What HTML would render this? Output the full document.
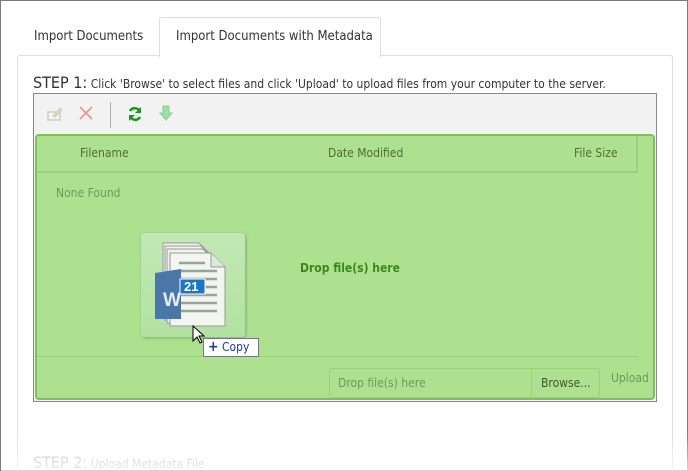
<!DOCTYPE html>
<html style="overflow:hidden"><head><meta charset="utf-8"><style>
*{box-sizing:border-box;margin:0;padding:0}
html,body{overflow:hidden}
body{width:688px;height:471px;background:#fff;font-family:"DejaVu Sans Condensed","Liberation Sans",sans-serif;position:relative;border:1px solid #7a7a7a}
.abs{position:absolute}
.tab{position:absolute;font-size:13px;color:#333}
</style></head><body>
<div class="tab" style="left:33px;top:28px">Import Documents</div>
<div class="abs" style="left:158px;top:16px;width:222px;height:40px;border:1px solid #ddd;border-bottom:none;background:#fff;z-index:2;border-radius:3px 3px 0 0"></div>
<div class="tab" style="left:175px;top:28px;z-index:3">Import Documents with Metadata</div>
<div class="abs" style="left:16px;top:54px;width:656px;height:430px;border:1px solid #ddd;border-radius:3px;z-index:1"></div>
<div class="abs" style="left:32px;top:72px;font-size:12px;color:#333;z-index:3;white-space:nowrap"><span style="font-size:16px">STEP 1:</span> Click 'Browse' to select files and click 'Upload' to upload files from your computer to the server.</div>
<div class="abs" style="left:32px;top:92px;width:624px;height:309px;border:1px solid #888;background:#f2f2f2;z-index:3">
  <svg class="abs" style="left:13px;top:12px" width="16" height="16" viewBox="0 0 16 16"><rect x="1" y="6" width="12" height="8" fill="#f4f4f4" stroke="#bbb"/><path d="M6 10 L13 2 L15 4 L8 11 Z" fill="#f3d9a0" stroke="#ccb"/></svg>
  <svg class="abs" style="left:45px;top:12px" width="14" height="14" viewBox="0 0 14 14"><path d="M1 1L13 13M13 1L1 13" stroke="#f09090" stroke-width="1.6"/></svg>
  <div class="abs" style="left:76px;top:8px;width:1px;height:26px;background:#aaa"></div>
  <svg class="abs" style="left:93px;top:12px" width="16" height="16" viewBox="0 0 16 16"><path d="M13 6A5.5 5.5 0 0 0 3 5" stroke="#1a9a1a" stroke-width="2.6" fill="none"/><path d="M3 10A5.5 5.5 0 0 0 13 11" stroke="#1a9a1a" stroke-width="2.6" fill="none"/><path d="M14 1V7H8Z" fill="#1a9a1a"/><path d="M2 15V9H8Z" fill="#1a9a1a"/></svg>
  <svg class="abs" style="left:125px;top:11px" width="14" height="17" viewBox="0 0 14 17"><path d="M4 1H10V8H13L7 15L1 8H4Z" fill="#9de0a8" stroke="#8ccf98"/></svg>
  <div class="abs" style="left:1px;top:40px;width:620px;height:266px;background:#ade190;border:2px solid #7fbf5e;border-radius:4px">
    <div class="abs" style="left:0;top:0;width:601px;height:37px;border-bottom:2px solid #9ccf80;border-right:2px solid #9ccf80"></div>
    <div class="abs" style="left:43px;top:10px;font-size:12px;color:#4e6e36">Filename</div>
    <div class="abs" style="left:291px;top:10px;font-size:12px;color:#4e6e36">Date Modified</div>
    <div class="abs" style="left:537px;top:10px;font-size:12px;color:#4e6e36">File Size</div>
    <div class="abs" style="left:19px;top:50px;font-size:12px;color:#6f9a55">None Found</div>
    <div class="abs" style="left:263px;top:125px;font-size:12px;color:#3a8a1a;font-weight:bold">Drop file(s) here</div>
    <div class="abs" style="left:0;top:220px;width:601px;height:1px;background:#9ccf80"></div>
    <div class="abs" style="left:292px;top:232px;width:271px;height:30px;border:1px solid #9ccf80;border-radius:3px"></div>
    <div class="abs" style="left:301px;top:240px;font-size:12px;color:#6f9a55">Drop file(s) here</div>
    <div class="abs" style="left:494px;top:232px;width:1px;height:30px;background:#9ccf80"></div>
    <div class="abs" style="left:504px;top:240px;font-size:12px;color:#3d5a2a">Browse...</div>
    <div class="abs" style="left:574px;top:235px;font-size:12px;color:#6f9a55">Upload</div>
  </div>
  <div class="abs" style="left:107px;top:139px;width:104px;height:104px;background:linear-gradient(#c2e8b4,#b2e2a2);border-radius:3px;box-shadow:1px 1px 3px rgba(0,0,0,.25)">
    <svg width="104" height="104" viewBox="0 0 104 104">
      <path d="M22 10H58L72 24V84H22Z" fill="#eef3ec" stroke="#999"/>
      <path d="M24 13H60L74 27V87H24Z" fill="#eef3ec" stroke="#999"/>
      <path d="M26 16H62L76 30V90H26Z" fill="#eef3ec" stroke="#999"/>
      <path d="M29 20H70L84 34V93H29Z" fill="#f2f5f0" stroke="#999"/>
      <path d="M70 20V34H84" fill="#dfe6dc" stroke="#999"/>
      <g stroke="#9aa39a" stroke-width="2.5"><path d="M38 30H64M38 38H76M38 46H76M38 54H76M38 62H76M38 70H76M38 78H76"/></g>
      <path d="M14 40L40 36V86H14Z" fill="#4a76a8"/>
      <text x="22" y="73" font-family="Liberation Sans" font-weight="bold" font-size="19" fill="#e4ecf4">W</text>
      <rect x="39" y="46" width="25" height="15" fill="#1a76c8" stroke="#fff"/>
      <text x="43" y="58" font-family="Liberation Sans" font-weight="bold" font-size="13" fill="#fff">21</text>
    </svg>
  </div>
  <svg class="abs" style="left:158px;top:231px" width="14" height="20" viewBox="0 0 14 20"><path d="M1 1V16L5 12L8 18L10 17L7 11H12Z" fill="#fff" stroke="#000"/></svg>
  <div class="abs" style="left:169px;top:244px;width:56px;height:19px;background:#fff;border:1px solid #777;font-size:12px;color:#1a3aa8;padding-left:4px;line-height:17px"><b style="font-size:14px">+</b> Copy</div>
</div>
<div class="abs" style="left:32px;top:452px;font-size:12px;color:#bbb;z-index:3;white-space:nowrap"><span style="font-size:16px">STEP 2:</span> Upload Metadata File</div>
<div class="abs" style="left:0;top:430px;width:688px;height:41px;background:linear-gradient(rgba(255,255,255,0),rgba(255,255,255,.7));z-index:4"></div>
</body></html>
